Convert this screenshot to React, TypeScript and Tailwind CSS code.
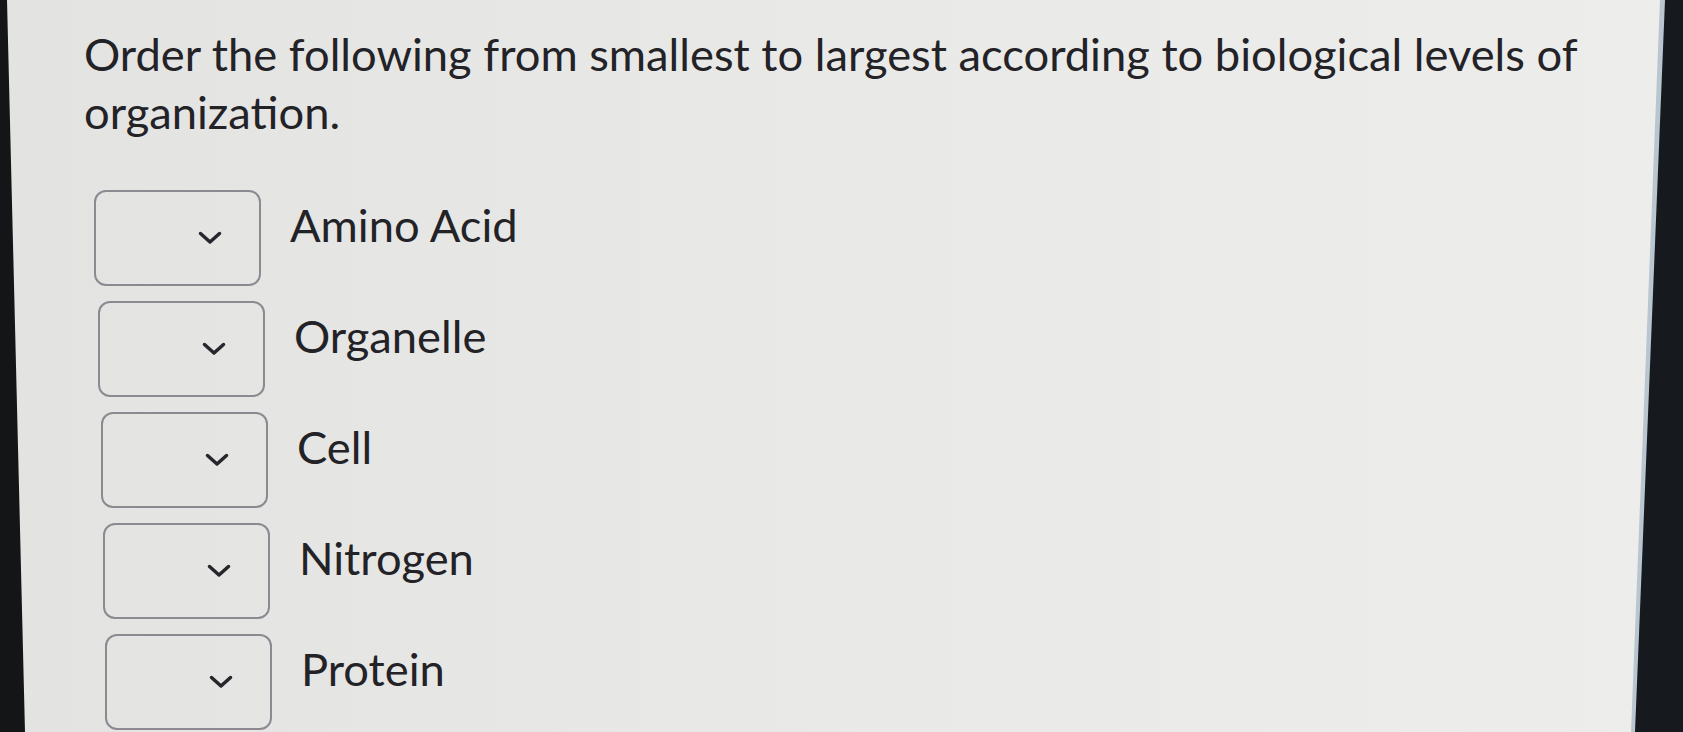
import React from "react";

type Item = { label: string; indent: string };

const items: Item[] = [
  { label: "Amino Acid", indent: "ml-[0px]" },
  { label: "Organelle", indent: "ml-[4px]" },
  { label: "Cell", indent: "ml-[7px]" },
  { label: "Nitrogen", indent: "ml-[9px]" },
  { label: "Protein", indent: "ml-[11px]" },
];

function Chevron() {
  return (
    <svg width="24" height="14" viewBox="0 0 24 14" fill="none" aria-hidden="true">
      <polyline
        points="2.5,2.5 12,11 21.5,2.5"
        stroke="#26262c"
        strokeWidth="3.5"
        strokeLinecap="round"
        strokeLinejoin="round"
      />
    </svg>
  );
}

function OrderSelect() {
  return (
    <div className="flex h-[96px] w-[167px] shrink-0 items-center justify-end rounded-[12px] border-2 border-[#8b8a90] pr-[37px]">
      <Chevron />
    </div>
  );
}

export default function App() {
  return (
    <div
      className="flex h-[732px] w-full overflow-hidden bg-gradient-to-r from-[#e3e3e1] via-[#e9e9e7] to-[#ededeb] text-[#222227]"
      style={{ fontFamily: "Lato, 'Noto Sans', sans-serif" }}
    >
      {/* left bezel */}
      <div className="w-[25px] shrink-0 bg-[#141517] [clip-path:polygon(0_0,7px_0,25px_100%,0_100%)]" />

      <main className="flex-1 pl-[59px] pt-[25px]">
        <h1 className="text-[45.3px] font-normal leading-[58px]">
          Order the following from smallest to largest according to biological levels of
          <br />
          organization.
        </h1>

        <ul className="ml-[10px] mt-[49px] flex flex-col gap-[15px]">
          {items.map((item) => (
            <li key={item.label} className={`flex items-start ${item.indent}`}>
              <OrderSelect />
              <span className="ml-[29px] mt-[6px] text-[45.3px] leading-[58px]">{item.label}</span>
            </li>
          ))}
        </ul>
      </main>

      {/* right bezel with its lit edge */}
      <div className="grid w-[52px] shrink-0">
        <div className="col-start-1 row-start-1 bg-[#b9c6cf] [clip-path:polygon(29px_0,100%_0,100%_100%,0_100%)]" />
        <div className="col-start-1 row-start-1 bg-[#161a1e] [clip-path:polygon(34px_0,100%_0,100%_100%,4px_100%)]" />
      </div>
    </div>
  );
}
